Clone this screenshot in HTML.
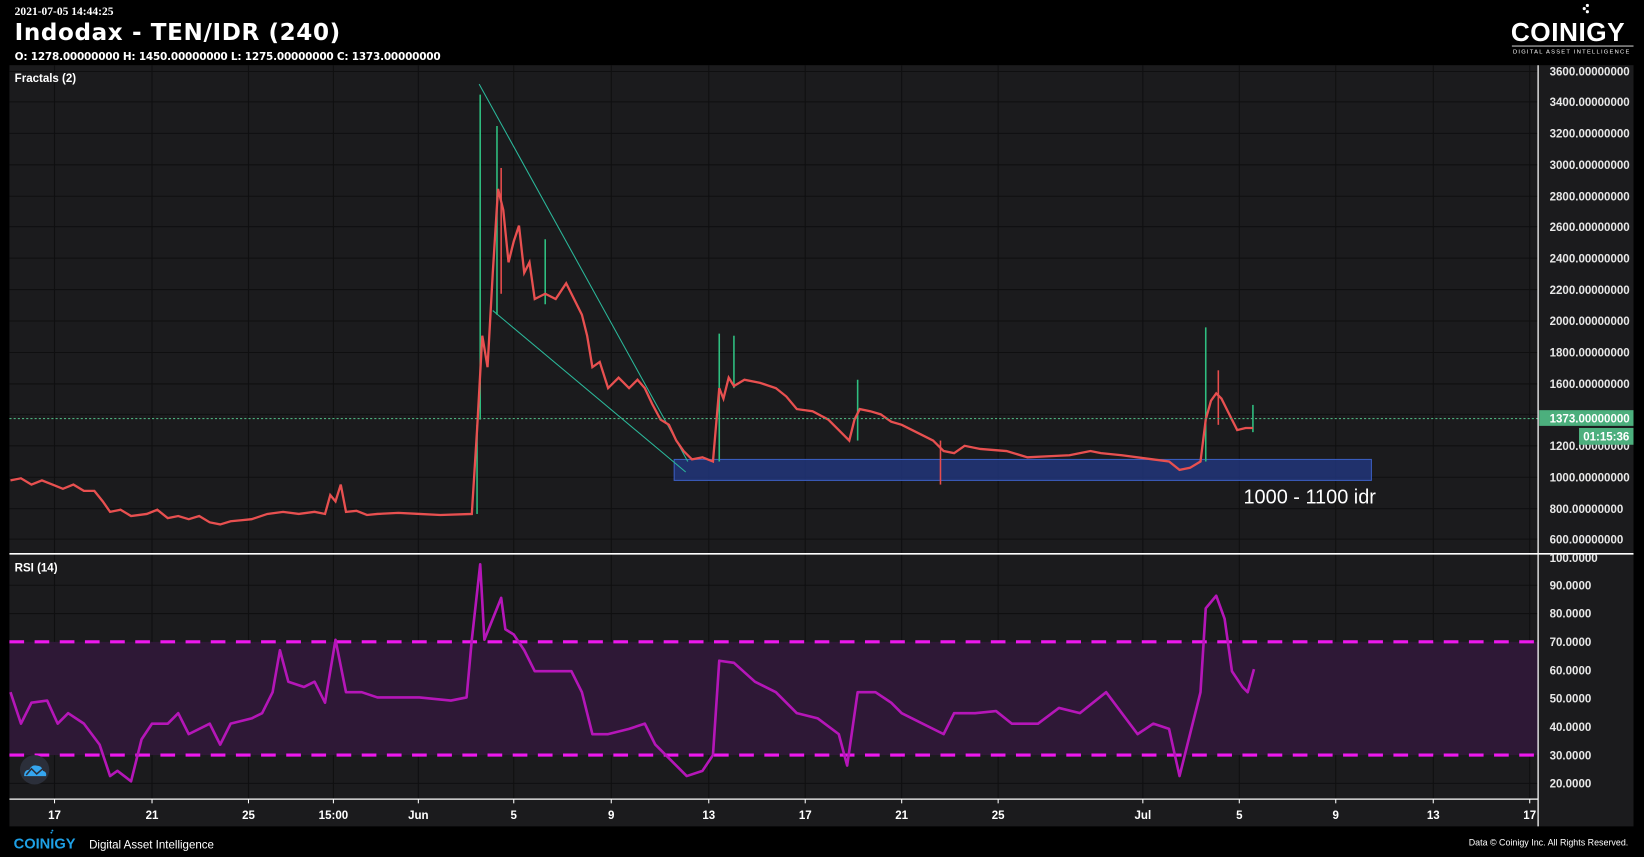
<!DOCTYPE html>
<html><head><meta charset="utf-8"><style>html,body{margin:0;padding:0;background:#000;overflow:hidden}svg{display:block}</style></head><body>
<svg width="1644" height="857" viewBox="0 0 1568 817" xmlns="http://www.w3.org/2000/svg" font-family="Liberation Sans, sans-serif">
<rect width="1568" height="817" fill="#000"/>
<text x="14" y="14" fill="#fff" font-size="11" font-family="Liberation Serif, serif" font-weight="bold">2021-07-05 14:44:25</text>
<text x="14" y="38" fill="#fff" font-size="22" font-weight="bold" font-family="DejaVu Sans, sans-serif" letter-spacing="0.6">Indodax - TEN/IDR (240)</text>
<text x="14" y="57" fill="#fff" font-size="10" font-weight="bold" font-family="DejaVu Sans, sans-serif" letter-spacing="-0.2">O: 1278.00000000 H: 1450.00000000 L: 1275.00000000 C: 1373.00000000</text>
<!-- logo -->
<circle cx="1514" cy="5" r="1.5" fill="#fff"/><circle cx="1511" cy="8" r="1.5" fill="#fff"/><circle cx="1514" cy="11" r="1.5" fill="#fff"/>
<text x="1441" y="39" fill="#fff" font-size="25" font-weight="bold" letter-spacing="0.5">COINIGY</text>
<rect x="1442" y="43" width="116" height="1.5" fill="#888"/>
<text x="1443" y="51" fill="#fff" font-size="5.5" letter-spacing="1.2">DIGITAL ASSET INTELLIGENCE</text>
<!-- panel -->
<rect x="9" y="62" width="1549" height="726" fill="#1b1b1d"/>
<g stroke="#0f0f10" stroke-width="1">
<line x1="52" y1="62" x2="52" y2="762"/><line x1="145" y1="62" x2="145" y2="762"/><line x1="237" y1="62" x2="237" y2="762"/><line x1="318" y1="62" x2="318" y2="762"/><line x1="399" y1="62" x2="399" y2="762"/><line x1="490" y1="62" x2="490" y2="762"/><line x1="583" y1="62" x2="583" y2="762"/><line x1="676" y1="62" x2="676" y2="762"/><line x1="768" y1="62" x2="768" y2="762"/><line x1="860" y1="62" x2="860" y2="762"/><line x1="952" y1="62" x2="952" y2="762"/><line x1="1090" y1="62" x2="1090" y2="762"/><line x1="1182" y1="62" x2="1182" y2="762"/><line x1="1274" y1="62" x2="1274" y2="762"/><line x1="1367" y1="62" x2="1367" y2="762"/><line x1="1459" y1="62" x2="1459" y2="762"/>
<line x1="9" y1="68" x2="1467" y2="68"/><line x1="9" y1="97" x2="1467" y2="97"/><line x1="9" y1="127" x2="1467" y2="127"/><line x1="9" y1="157" x2="1467" y2="157"/><line x1="9" y1="187" x2="1467" y2="187"/><line x1="9" y1="216" x2="1467" y2="216"/><line x1="9" y1="246" x2="1467" y2="246"/><line x1="9" y1="276" x2="1467" y2="276"/><line x1="9" y1="306" x2="1467" y2="306"/><line x1="9" y1="336" x2="1467" y2="336"/><line x1="9" y1="366" x2="1467" y2="366"/><line x1="9" y1="395" x2="1467" y2="395"/><line x1="9" y1="425" x2="1467" y2="425"/><line x1="9" y1="455" x2="1467" y2="455"/><line x1="9" y1="485" x2="1467" y2="485"/><line x1="9" y1="514" x2="1467" y2="514"/>
<line x1="9" y1="558" x2="1467" y2="558"/><line x1="9" y1="585" x2="1467" y2="585"/><line x1="9" y1="639" x2="1467" y2="639"/><line x1="9" y1="666" x2="1467" y2="666"/><line x1="9" y1="693" x2="1467" y2="693"/><line x1="9" y1="747" x2="1467" y2="747"/>
</g>
<text x="14" y="78" fill="#fff" font-size="11" font-weight="bold">Fractals (2)</text>
<!-- box -->
<rect x="643" y="438" width="665" height="20" fill="#21357a" fill-opacity="0.85" stroke="#3a5ec0" stroke-width="1"/>
<text x="1186" y="480" fill="#fff" font-size="19">1000 - 1100 idr</text>
<!-- trendlines -->
<g stroke="#2bb89a" stroke-width="1" fill="none">
<line x1="457" y1="80" x2="656" y2="440"/><line x1="470" y1="296" x2="654" y2="450"/>
</g>
<!-- wicks -->
<g stroke-width="1.5">
<line x1="458" y1="90" x2="458" y2="400" stroke="#2fbf80"/><line x1="474" y1="120" x2="474" y2="300" stroke="#2fbf80"/><line x1="478" y1="160" x2="478" y2="280" stroke="#e74c4c"/>
<line x1="686" y1="318" x2="686" y2="440" stroke="#2fbf80"/><line x1="700" y1="320" x2="700" y2="370" stroke="#2fbf80"/><line x1="1150" y1="312" x2="1150" y2="440" stroke="#2fbf80"/><line x1="1162" y1="353" x2="1162" y2="405" stroke="#e74c4c"/><line x1="1195" y1="386" x2="1195" y2="412" stroke="#2fbf80"/>
<line x1="455" y1="405" x2="455" y2="490" stroke="#2fbf80"/><line x1="520" y1="228" x2="520" y2="290" stroke="#2fbf80"/><line x1="818" y1="362" x2="818" y2="420" stroke="#2fbf80"/><line x1="897" y1="420" x2="897" y2="462" stroke="#e74c4c"/>
</g>
<polyline fill="none" stroke="#e85050" stroke-width="2.2" points="10,458 20,456 30,462 40,458 50,462 60,466 70,462 80,468 90,468 98,478 105,488 115,486 125,492 140,490 150,486 160,494 170,492 180,495 190,492 200,498 210,500 220,497 230,496 240,495 255,490 270,488 285,490 300,488 310,490 315,472 320,478 325,462 330,488 340,487 350,491 360,490 380,489 400,490 420,491 450,490 455,410 460,320 465,350 470,260 475,180 480,200 485,250 490,230 495,215 500,260 505,250 510,285 520,280 530,285 540,270 545,280 555,300 560,320 565,350 572,345 580,370 590,360 600,370 608,362 615,370 622,385 630,400 638,405 645,420 652,430 660,438 670,436 680,440 686,370 690,380 695,360 700,368 710,362 725,365 740,370 750,378 760,390 775,392 790,400 800,410 810,420 815,400 820,390 830,392 840,395 850,402 860,405 870,410 880,415 890,420 900,430 910,432 920,425 935,428 960,430 980,436 1000,435 1020,434 1040,430 1050,432 1070,434 1100,438 1115,440 1125,448 1135,446 1145,440 1150,400 1155,382 1160,375 1165,380 1170,390 1175,400 1180,410 1188,408 1195,408"/>
<line x1="9" y1="399" x2="1467" y2="399" stroke="#4caf7d" stroke-width="1" stroke-dasharray="2 2"/>
<!-- RSI -->
<line x1="9" y1="528" x2="1558" y2="528" stroke="#fff" stroke-width="1.5"/>
<text x="14" y="545" fill="#fff" font-size="11" font-weight="bold">RSI (14)</text>
<rect x="9" y="612" width="1458" height="108" fill="#2e1836"/>
<g stroke="#ee18ee" stroke-width="3" stroke-dasharray="14 10"><line x1="9" y1="612" x2="1467" y2="612"/><line x1="9" y1="720" x2="1467" y2="720"/></g>
<polyline fill="none" stroke="#b516b8" stroke-width="2.5" stroke-linejoin="round" points="10,660 20,690 30,670 45,668 55,690 65,680 80,690 95,710 105,740 112,735 125,745 135,705 145,690 160,690 170,680 180,700 200,690 210,710 220,690 240,685 250,680 260,660 267,620 275,650 290,655 300,650 310,670 320,610 330,660 345,660 360,665 400,665 430,668 445,665 450,610 458,538 462,610 470,590 478,570 482,600 490,605 500,620 510,640 530,640 545,640 555,660 565,700 580,700 600,695 615,690 625,710 640,725 655,740 670,735 680,720 686,630 700,632 720,650 740,660 760,680 780,685 800,700 808,730 818,660 835,660 850,670 860,680 880,690 900,700 910,680 930,680 950,678 965,690 990,690 1010,675 1030,680 1055,660 1070,680 1085,700 1100,690 1115,695 1125,740 1135,700 1145,660 1150,580 1160,568 1168,590 1175,640 1185,655 1190,660 1196,638"/>
<circle cx="33" cy="734" r="14" fill="#2b2f3a"/>
<path d="M23 740 q0-6 5-6 q2-5 7-4 q5 0 6 5 q4 1 3 5 z" fill="#35a6f0"/>
<polyline points="25,739 30,733 35,738 42,732" fill="none" stroke="#2b2f3a" stroke-width="1.5"/>
<!-- axes -->
<line x1="1467" y1="62" x2="1467" y2="788" stroke="#fff" stroke-width="1.2"/>
<line x1="9" y1="762" x2="1467" y2="762" stroke="#fff" stroke-width="1.2"/>
<g fill="#e8e8e8" font-size="11" font-weight="bold">
<text x="1478" y="72">3600.00000000</text><text x="1478" y="101">3400.00000000</text><text x="1478" y="131">3200.00000000</text><text x="1478" y="161">3000.00000000</text><text x="1478" y="191">2800.00000000</text><text x="1478" y="220">2600.00000000</text><text x="1478" y="250">2400.00000000</text><text x="1478" y="280">2200.00000000</text><text x="1478" y="310">2000.00000000</text><text x="1478" y="340">1800.00000000</text><text x="1478" y="370">1600.00000000</text><text x="1478" y="429">1200.00000000</text><text x="1478" y="459">1000.00000000</text><text x="1478" y="489">800.00000000</text><text x="1478" y="518">600.00000000</text>
<text x="1478" y="536">100.0000</text><text x="1478" y="562">90.0000</text><text x="1478" y="589">80.0000</text><text x="1478" y="616">70.0000</text><text x="1478" y="643">60.0000</text><text x="1478" y="670">50.0000</text><text x="1478" y="697">40.0000</text><text x="1478" y="724">30.0000</text><text x="1478" y="751">20.0000</text>
</g>
<rect x="1468" y="391" width="90" height="15" fill="#4caf7d"/>
<text x="1478" y="403" fill="#fff" font-size="11" font-weight="bold">1373.00000000</text>
<rect x="1506" y="408" width="52" height="16" fill="#4caf7d"/>
<text x="1510" y="420" fill="#fff" font-size="11" font-weight="bold">01:15:36</text>
<g fill="#fff" font-size="11" font-weight="bold" text-anchor="middle">
<text x="52" y="781">17</text><text x="145" y="781">21</text><text x="237" y="781">25</text><text x="318" y="781">15:00</text><text x="399" y="781">Jun</text><text x="490" y="781">5</text><text x="583" y="781">9</text><text x="676" y="781">13</text><text x="768" y="781">17</text><text x="860" y="781">21</text><text x="952" y="781">25</text><text x="1090" y="781">Jul</text><text x="1182" y="781">5</text><text x="1274" y="781">9</text><text x="1367" y="781">13</text><text x="1459" y="781">17</text>
</g>
<g stroke="#fff"><line x1="52" y1="762" x2="52" y2="766"/><line x1="145" y1="762" x2="145" y2="766"/><line x1="237" y1="762" x2="237" y2="766"/><line x1="318" y1="762" x2="318" y2="766"/><line x1="399" y1="762" x2="399" y2="766"/><line x1="490" y1="762" x2="490" y2="766"/><line x1="583" y1="762" x2="583" y2="766"/><line x1="676" y1="762" x2="676" y2="766"/><line x1="768" y1="762" x2="768" y2="766"/><line x1="860" y1="762" x2="860" y2="766"/><line x1="952" y1="762" x2="952" y2="766"/><line x1="1090" y1="762" x2="1090" y2="766"/><line x1="1182" y1="762" x2="1182" y2="766"/><line x1="1274" y1="762" x2="1274" y2="766"/><line x1="1367" y1="762" x2="1367" y2="766"/><line x1="1459" y1="762" x2="1459" y2="766"/></g>
<rect x="1558" y="62" width="10" height="726" fill="#000"/>
<!-- footer -->
<circle cx="50" cy="792" r="0.9" fill="#1ea0e6"/><circle cx="49" cy="794" r="0.9" fill="#1ea0e6"/>
<text x="13" y="809" fill="#1ea0e6" font-size="14" font-weight="bold">COINIGY</text>
<text x="85" y="809" fill="#fff" font-size="11">Digital Asset Intelligence</text>
<text x="1553" y="806" fill="#fff" font-size="8.5" text-anchor="end">Data © Coinigy Inc. All Rights Reserved.</text>
</svg>
</body></html>
